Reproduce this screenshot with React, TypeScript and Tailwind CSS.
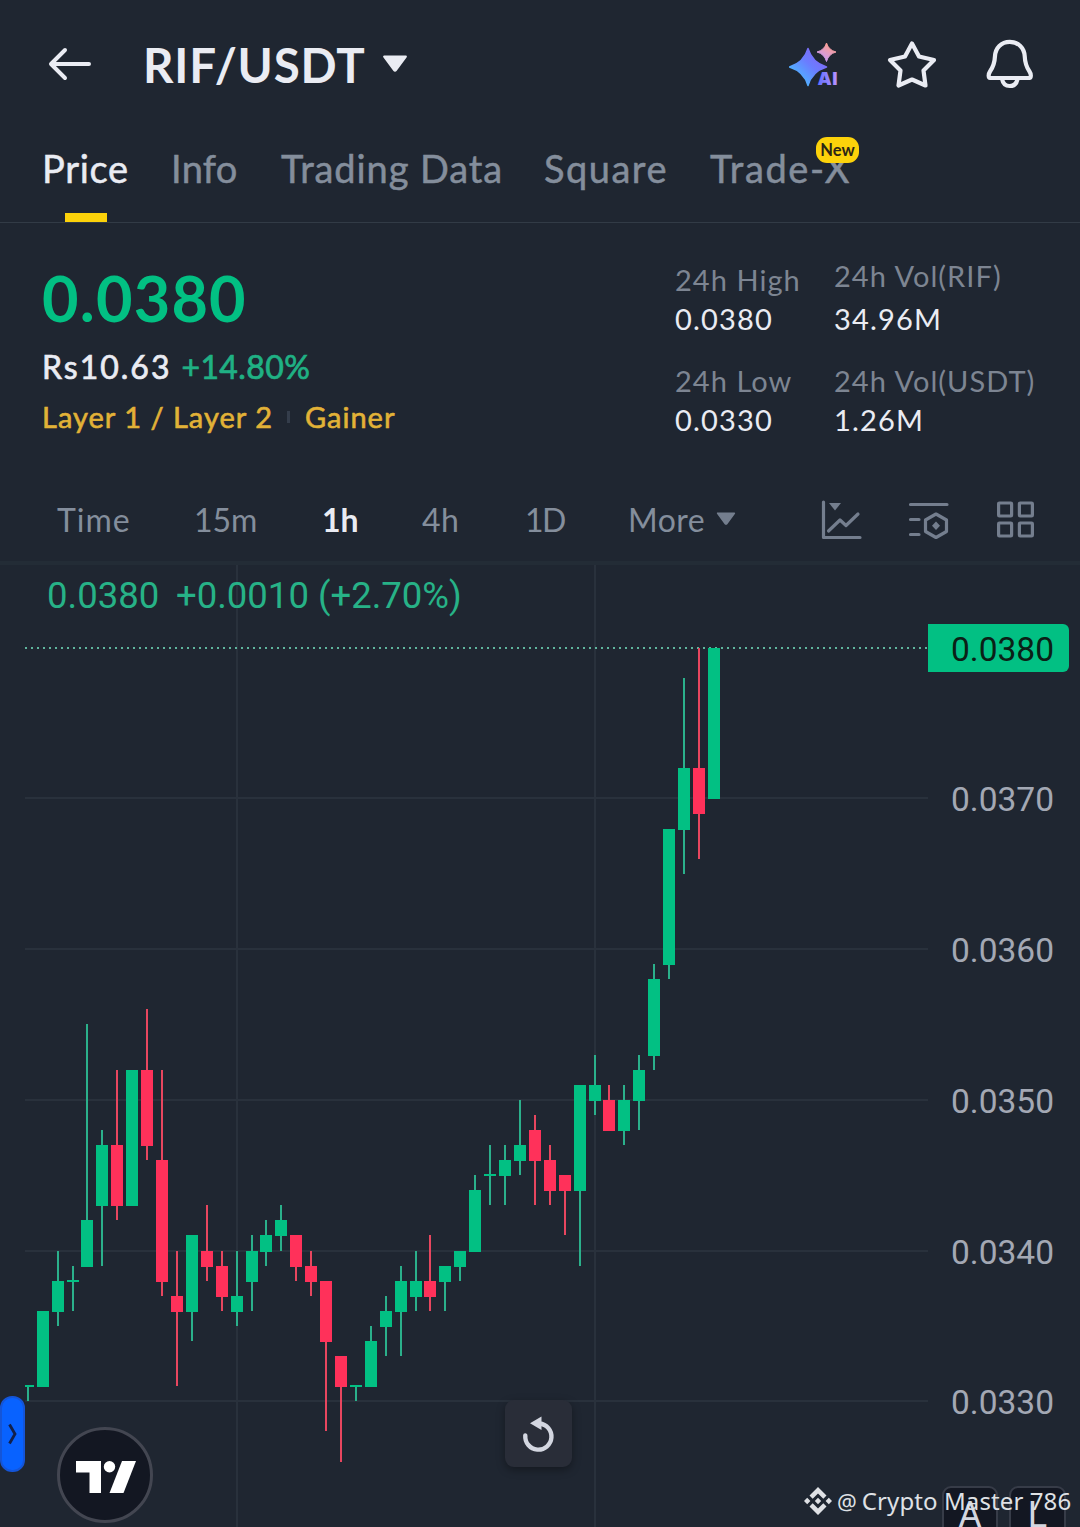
import { ReactNode } from 'react'

type Candle = {
  // prices are in ticks of 0.0001
  high: number
  top: number
  bottom: number
  low: number
  up: boolean
}

const GREEN = '#02c083'
const RED = '#ff315a'

const c = (high: number, top: number, bottom: number, low: number, up = true): Candle => ({
  high,
  top,
  bottom,
  low,
  up,
})

const candles: Candle[] = [
  c(331, 331, 331, 330),
  c(336, 336, 331, 331),
  c(340, 338, 336, 335),
  c(339, 338, 338, 336),
  c(355, 342, 339, 339),
  c(348, 347, 343, 339),
  c(352, 347, 343, 342, false),
  c(352, 352, 343, 343),
  c(356, 352, 347, 346, false),
  c(352, 346, 338, 337, false),
  c(340, 337, 336, 331, false),
  c(341, 341, 336, 334),
  c(343, 340, 339, 338, false),
  c(340, 339, 337, 336, false),
  c(340, 337, 336, 335),
  c(341, 340, 338, 336),
  c(342, 341, 340, 339),
  c(343, 342, 341, 340),
  c(341, 341, 339, 338, false),
  c(340, 339, 338, 337, false),
  c(338, 338, 334, 328, false),
  c(333, 333, 331, 326, false),
  c(331, 331, 331, 330),
  c(335, 334, 331, 331),
  c(337, 336, 335, 333),
  c(339, 338, 336, 333),
  c(340, 338, 337, 336),
  c(341, 338, 337, 336, false),
  c(339, 339, 338, 336),
  c(340, 340, 339, 338),
  c(345, 344, 340, 340),
  c(347, 345, 345, 343),
  c(347, 346, 345, 343),
  c(350, 347, 346, 345),
  c(349, 348, 346, 343, false),
  c(347, 346, 344, 343, false),
  c(345, 345, 344, 341, false),
  c(351, 351, 344, 339),
  c(353, 351, 350, 349),
  c(351, 350, 348, 348, false),
  c(351, 350, 348, 347),
  c(353, 352, 350, 348),
  c(359, 358, 353, 352),
  c(368, 368, 359, 358),
  c(378, 372, 368, 365),
  c(380, 372, 369, 366, false),
  c(380, 380, 370, 370),
]

const gridPrices = [370, 360, 350, 340, 330]

const priceY = (ticks: number) => Math.floor(88.22 + (380 - ticks) * 15.07)
const candleX = (i: number) => Math.ceil(27.31 + 14.9138 * i)

const Caret = ({ width, className }: { width: number; className: string }) => (
  <svg width={width} viewBox="0 0 24 16" className={className}>
    <path
      d="M2 1.5h20L12.8 14a1 1 0 0 1-1.6 0z"
      fill="currentColor"
      stroke="currentColor"
      strokeWidth="2"
      strokeLinejoin="round"
    />
  </svg>
)

const Header = () => (
  <header className="flex h-32 items-center pl-12 pr-[45px] text-[#eaecf3]">
    <svg
      width="44"
      height="36"
      viewBox="0 0 44 36"
      fill="none"
      stroke="currentColor"
      strokeWidth="4"
      strokeLinecap="round"
      strokeLinejoin="round"
    >
      <path d="M17 4 3 18l14 14M3.5 18H41" />
    </svg>
    <h1 className="ml-[51px] pt-0.5 text-[47.5px] font-bold leading-none tracking-[0.8px]">RIF/USDT</h1>
    <Caret width={26} className="ml-4" />
    <div className="ml-auto flex items-center">
      <svg width="50" height="46" viewBox="788 41 50 46">
        <defs>
          <linearGradient id="spark" x1="0" y1="1" x2="1" y2="0">
            <stop offset="0.2" stopColor="#4fb4ff" />
            <stop offset="0.55" stopColor="#6a7dff" />
            <stop offset="1" stopColor="#8a5cf0" />
          </linearGradient>
          <linearGradient id="sparkSmall" x1="0" y1="1" x2="0.6" y2="0">
            <stop offset="0.2" stopColor="#c79af5" />
            <stop offset="1" stopColor="#ff9f8c" />
          </linearGradient>
          <linearGradient id="aiText" x1="0" y1="0" x2="1" y2="0">
            <stop offset="0" stopColor="#6070ff" />
            <stop offset="1" stopColor="#b993ff" />
          </linearGradient>
        </defs>
        <path
          d="M807 48.5Q811 62.5 825.5 67Q811 71.5 807 85.5Q803 71.5 788.5 67Q803 62.5 807 48.5Z"
          fill="url(#spark)"
          stroke="url(#spark)"
          strokeWidth="1.5"
          strokeLinejoin="round"
        />
        <path
          d="M825.5 43Q827.5 50 835 52Q827.5 54 825.5 61.5Q823.5 54 816 52Q823.5 50 825.5 43Z"
          fill="url(#sparkSmall)"
          stroke="url(#sparkSmall)"
          strokeLinejoin="round"
        />
        <text
          x="816.5"
          y="84.5"
          fontFamily="Inter, sans-serif"
          fontSize="18"
          fontWeight="900"
          textLength="20"
          fill="url(#aiText)"
          stroke="#1f2631"
          strokeWidth="3"
          paintOrder="stroke"
        >
          AI
        </text>
      </svg>
      <svg
        width="52"
        height="50"
        viewBox="886 39 52 50"
        className="ml-[47px]"
        fill="none"
        stroke="currentColor"
        strokeWidth="4.2"
        strokeLinejoin="round"
      >
        <path d="M912 43.5L919 56.5L934 60L923.5 70.5L925.5 85.5L912 79.5L898.5 85.5L900.5 70.5L890 60L905 56.5Z" />
      </svg>
      <svg
        width="50"
        height="52"
        viewBox="985 38 50 52"
        className="ml-[47px]"
        fill="none"
        stroke="currentColor"
        strokeWidth="4.2"
        strokeLinejoin="round"
      >
        <path d="M1009.8 41.8C1001 41.8 995.5 48 995 56C994.7 63 993.5 66.5 990 71.5C988 74.5 988.5 78 990 78H1029.5C1031 78 1031.5 74.5 1029.5 71.5C1026 66.5 1025 63 1024.7 56C1024.2 48 1018.5 41.8 1009.8 41.8Z" />
        <path d="M1002.2 79.5C1003 84 1006 86 1009.8 86S1016.5 84 1017.4 79.5" />
      </svg>
    </div>
  </header>
)

const Tabs = () => (
  <nav className="flex h-[95px] items-start border-b border-[#323b46] pl-[42px] pt-[21px] text-[38px] leading-none text-[#848e9c] [-webkit-text-stroke:0.5px]">
    <div className="flex h-[73px] w-[87px] flex-col items-center justify-between text-[#eaecf3]">
      <span className="tracking-[0.7px]">Price</span>
      <span className="h-[9px] w-[42px] shrink-0 bg-[#fcd20a]" />
    </div>
    <span className="ml-[42px] w-[68px] tracking-[0.3px]">Info</span>
    <span className="ml-[42px] w-[222px] whitespace-nowrap tracking-[0.9px]">Trading Data</span>
    <span className="ml-[41px] w-[124px] tracking-[1.5px]">Square</span>
    <span className="relative ml-[42px] whitespace-nowrap tracking-[1.6px]">
      Trade-X
      <span className="absolute left-[106px] top-[-12px] flex h-[26px] w-[43px] items-center justify-center rounded-[11px] bg-[#fcd20a] text-[16.5px] font-bold tracking-normal text-[#2c2616] [-webkit-text-stroke:0]">
        New
      </span>
    </span>
  </nav>
)

const Stat = ({ label, value, className }: { label: string; value: string; className?: string }) => (
  <div className={`flex flex-col whitespace-nowrap text-[29px] leading-none ${className ?? ''}`}>
    <span className="tracking-[1.05px] text-[#7d8592]">{label}</span>
    <span className="mt-auto tracking-[1.2px] text-[#eaecf3]">{value}</span>
  </div>
)

const Summary = () => (
  <section className="flex h-[257px] items-start pl-[42px] pt-[42px]">
    <div className="w-[633px] whitespace-nowrap pt-px leading-none">
      <div className="text-[63px] font-bold tracking-[1.2px] text-[#02c083]">0.0380</div>
      <div className="mt-[22px] flex gap-[10px] text-[32px] [-webkit-text-stroke:0.7px]">
        <span className="tracking-[2px] text-[#eaecf3]">Rs10.63</span>
        <span className="tracking-[0.4px] text-[#1fb184]">+14.80%</span>
      </div>
      <div className="mt-[19px] flex items-center text-[29px] tracking-[1px] text-[#e2b237] [-webkit-text-stroke:0.6px]">
        <span>Layer 1 / Layer 2</span>
        <span className="ml-[14px] mr-[15px] h-3 w-[3px] bg-[#343d4b]" />
        <span>Gainer</span>
      </div>
    </div>
    <div className="flex">
      <div className="flex w-[159px] flex-col">
        <Stat label="24h High" value="0.0380" className="h-[68px]" />
        <Stat label="24h Low" value="0.0330" className="mt-[33px] h-[68px]" />
      </div>
      <div className="flex flex-col">
        <Stat label="24h Vol(RIF)" value="34.96M" className="-mt-1 h-[72px]" />
        <Stat label="24h Vol(USDT)" value="1.26M" className="mt-[33px] h-[68px]" />
      </div>
    </div>
  </section>
)

const Period = ({ className, children }: { className: string; children: ReactNode }) => (
  <span className={`shrink-0 whitespace-nowrap ${className}`}>{children}</span>
)

const Toolbar = () => (
  <div className="flex h-[85px] items-center border-b-4 border-[#232c36] pb-0.5 pl-[57px] pr-[46px] text-[32px] leading-none text-[#848e9c]">
    <Period className="w-[137px] tracking-[1px]">Time</Period>
    <Period className="w-[128px]">15m</Period>
    <Period className="w-[100px] font-bold text-[#eaecf3]">1h</Period>
    <Period className="w-[103px] tracking-[0.5px]">4h</Period>
    <Period className="w-[103px] tracking-[-1.5px]">1D</Period>
    <Period className="tracking-[0.5px]">More</Period>
    <Caret width={20} className="mb-0.5 ml-[11px] text-[#747e8e]" />
    <div className="ml-auto flex shrink-0 items-center gap-[46px] text-[#747e8e]">
      <svg
        width="42"
        height="42"
        viewBox="820 499 42 42"
        fill="none"
        stroke="currentColor"
        strokeWidth="3.2"
        strokeLinecap="round"
        strokeLinejoin="round"
      >
        <path d="M823.5 502V537.5H860" />
        <path d="M828.5 531L840 520L846 525.5L858 514" />
        <path d="M829 503H841L835 510.5Z" fill="currentColor" stroke="none" />
      </svg>
      <svg
        width="42"
        height="42"
        viewBox="908 499 42 42"
        fill="none"
        stroke="currentColor"
        strokeWidth="3.2"
        strokeLinecap="round"
        strokeLinejoin="round"
      >
        <path d="M910.5 504.5H947M910.5 519.5H919M910.5 534.5H919" />
        <path d="M936 514L946.5 520V531.5L936 537.5L925.5 531.5V520Z" />
        <path d="M936 521.5L940 525.7L936 530L932 525.7Z" fill="currentColor" stroke="none" />
      </svg>
      <svg width="38" height="38" viewBox="-1 0 38 38" fill="none" stroke="currentColor" strokeWidth="3.2">
        <rect x="1.6" y="2" width="13" height="13" rx="0.8" />
        <rect x="22.4" y="2" width="13" height="13" rx="0.8" />
        <rect x="1.6" y="22" width="13" height="13" rx="0.8" />
        <rect x="22.4" y="22" width="13" height="13" rx="0.8" />
      </svg>
    </div>
  </div>
)

const CandleShape = ({ candle, index }: { candle: Candle; index: number }) => {
  const x = candleX(index)
  const color = candle.up ? GREEN : RED
  const wickColor = candle.up ? '#2bb08b' : '#e8465f'
  const top = priceY(candle.top)
  const bottom = priceY(candle.bottom)
  const isDoji = candle.top === candle.bottom

  return (
    <g>
      <rect
        x={x - 1}
        y={priceY(candle.high)}
        width={2}
        height={priceY(candle.low) - priceY(candle.high)}
        fill={wickColor}
      />
      <rect x={x - 6} y={isDoji ? top - 1 : top} width={12} height={isDoji ? 2 : bottom - top + 1} fill={color} />
    </g>
  )
}

const Chart = () => (
  <div className="relative h-[962px] overflow-hidden font-[Roboto,sans-serif]">
    <svg width="1080" height="962" viewBox="0 5 1080 962" className="block">
      {gridPrices.map((p) => (
        <g key={p}>
          <rect x="25" y={priceY(p) - 1} width="903" height="2" fill="#29313c" />
          <text x="951" y={priceY(p) + 12.6} fontSize="33.5" fill="#a3a8b4">
            {`0.0${p}`}
          </text>
        </g>
      ))}
      <rect x="236" y="0" width="2" height="967" fill="#29313c" />
      <rect x="594" y="0" width="2" height="967" fill="#29313c" />
      <line x1="25" x2="928" y1="88" y2="88" stroke="#5fb59d" strokeWidth="2" strokeDasharray="2 4" />
      <svg x="25" y="0" width="903" height="967" viewBox="25 0 903 967">
        {candles.map((candle, i) => (
          <CandleShape key={i} candle={candle} index={i} />
        ))}
      </svg>
    </svg>

    <div className="absolute left-[47px] top-[10px] flex whitespace-pre text-[36.5px] leading-[42px] text-[#27b287]">
      <span className="w-[129px]">0.0380</span>
      <span>+0.0010 (+2.70%)</span>
    </div>
    <div className="absolute left-[928px] top-[59px] flex h-12 w-[141px] items-center rounded-r-[6px] bg-[#02c083] pl-[23px] pt-1 text-[33.5px] leading-none text-[#0b2016]">
      0.0380
    </div>

    {/* drawer handle */}
    <div className="absolute left-0 top-[831px] flex h-[76px] w-[25px] items-center justify-center rounded-xl border-2 border-[#1455d8] bg-[#0862ff]">
      <svg width="12" height="22" viewBox="0 0 12 22" fill="none" stroke="#12204a" strokeWidth="2.8">
        <path d="M2.5 1.5L8 11L2.5 20.5" />
      </svg>
    </div>

    <svg className="absolute left-14 top-[861px]" width="98" height="98" viewBox="56 1426 98 98">
      <circle cx="105" cy="1475" r="46.5" fill="#131722" stroke="#434651" strokeWidth="3" />
      <path d="M76 1461H101V1493H89.5V1472.5H76Z" fill="#fff" />
      <circle cx="109.5" cy="1466.8" r="5.7" fill="#fff" />
      <path d="M122 1461H136L123.5 1493H109.5Z" fill="#fff" />
    </svg>

    <button className="absolute left-[505px] top-[835px] flex size-[67px] items-center justify-center rounded-[9px] bg-[#292d38] shadow-[0_3px_8px_rgba(0,0,0,0.35)]">
      <svg width="36" height="38" viewBox="521 1415 36 38" fill="none">
        <path
          d="M525.3 1435.5A13.1 13.1 0 1 0 539.5 1423.5"
          stroke="#d3d6e0"
          strokeWidth="4.4"
          strokeLinecap="round"
        />
        <path d="M530 1423.2L541.5 1416.5V1430Z" fill="#d3d6e0" />
      </svg>
    </button>

    {/* scale toggles, cut off by the bottom edge */}
    <div className="absolute left-[942px] top-[921px] flex gap-[11px] text-[36px] leading-none text-[#d3d6e0]">
      <span className="flex h-14 w-14 justify-center rounded-[9px] border-2 border-[#373c48] bg-[#131722] pt-[9px]">A</span>
      <span className="flex h-14 w-[57px] justify-center rounded-[9px] border-2 border-[#373c48] bg-[#131722] pt-[9px]">L</span>
    </div>

    <div className="absolute left-[804px] top-[919px] flex items-center whitespace-nowrap font-['Noto_Sans',sans-serif] text-[24px] leading-[34px] text-[#dfe1e5]">
      <svg width="28" height="28" viewBox="0 0 28 28" fill="currentColor">
        <path d="M14 0L22.5 8.5L19.3 11.7L14 6.4L8.7 11.7L5.5 8.5Z" />
        <path d="M14 28L22.5 19.5L19.3 16.3L14 21.6L8.7 16.3L5.5 19.5Z" />
        <path d="M14 10.8L17.2 14L14 17.2L10.8 14ZM3.2 10.8L6.4 14L3.2 17.2L0 14ZM24.8 10.8L28 14L24.8 17.2L21.6 14Z" />
      </svg>
      <span className="ml-[5px] text-[22px]">@</span>
      <span className="ml-[5px] tracking-[0.1px]">Crypto Master 786</span>
    </div>
  </div>
)

export default function App() {
  return (
    <div className="h-[1527px] w-[1080px] overflow-hidden bg-[#1f2631] font-[Lato,'Open_Sans',sans-serif]">
      <Header />
      <Tabs />
      <Summary />
      <Toolbar />
      <Chart />
    </div>
  )
}
